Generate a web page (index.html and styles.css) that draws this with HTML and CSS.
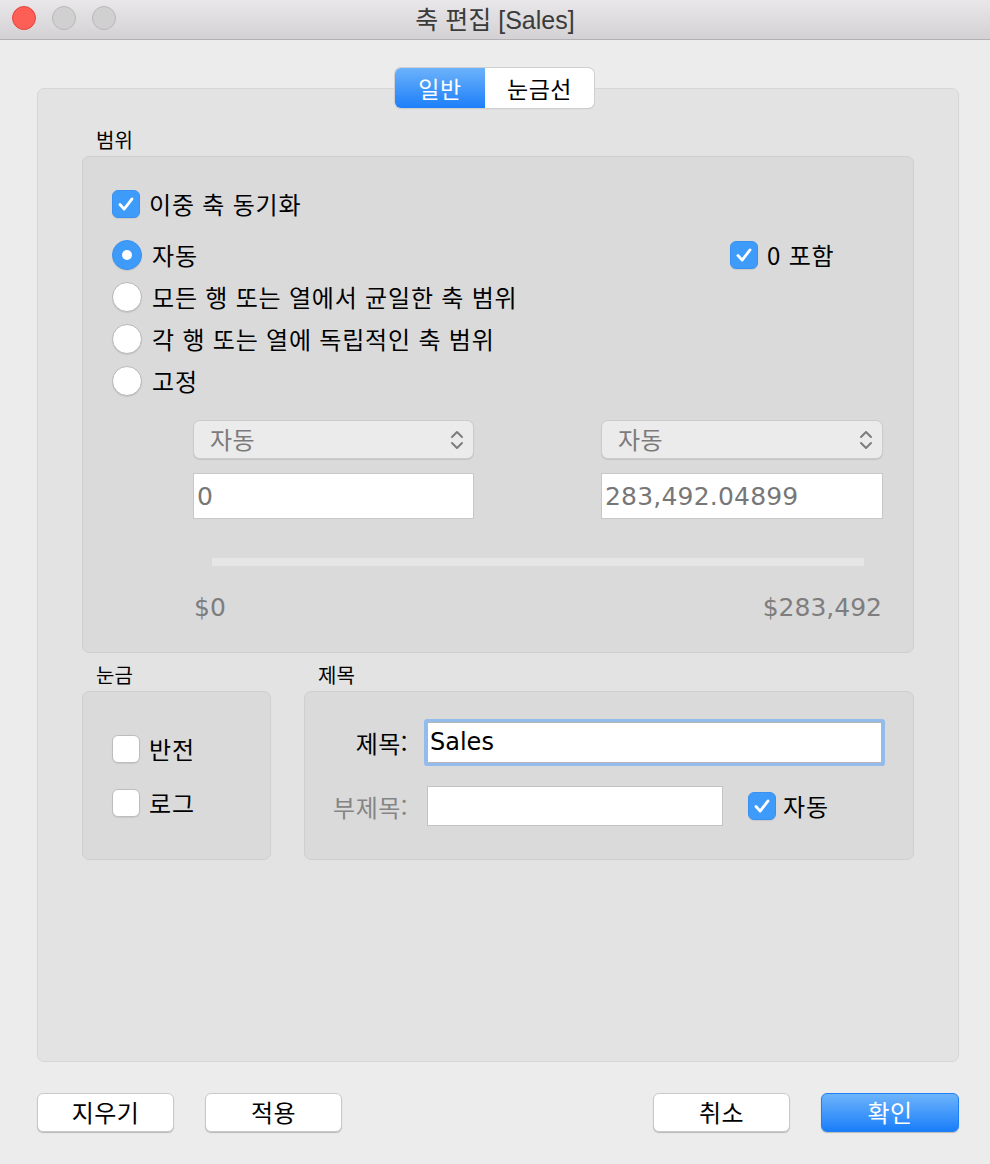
FILE: index.html
```html
<!DOCTYPE html>
<html lang="ko">
<head>
<meta charset="utf-8">
<title>축 편집 [Sales]</title>
<link rel="stylesheet" href="styles.css">
</head>
<body>
<div class="window">
  <header class="titlebar">
    <div class="lights">
      <span class="light red"></span>
      <span class="light"></span>
      <span class="light"></span>
    </div>
    <div class="title">축 편집 [Sales]</div>
    <div></div>
  </header>

  <main class="main">
    <div class="seg-wrap">
      <div class="seg">
        <span class="seg-item active">일반</span>
        <span class="seg-item">눈금선</span>
      </div>
    </div>

    <section class="panel">
      <div class="sec-label">범위</div>
      <div class="group range">
        <label class="chk-row">
          <span class="chk on"><svg viewBox="0 0 28 28"><path d="M7.5 14.5 L12 19.5 L20.5 8.5" /></svg></span>
          <span class="txt">이중 축 동기화</span>
        </label>

        <div class="radios">
          <div class="rrow">
            <label class="radio-item first">
              <span class="radio on"></span><span class="txt">자동</span>
            </label>
            <label class="chk-inline">
              <span class="chk on"><svg viewBox="0 0 28 28"><path d="M7.5 14.5 L12 19.5 L20.5 8.5" /></svg></span>
              <span class="txt">0 포함</span>
            </label>
          </div>
          <div class="rrow">
            <label class="radio-item"><span class="radio"></span><span class="txt">모든 행 또는 열에서 균일한 축 범위</span></label>
          </div>
          <div class="rrow">
            <label class="radio-item"><span class="radio"></span><span class="txt">각 행 또는 열에 독립적인 축 범위</span></label>
          </div>
          <div class="rrow">
            <label class="radio-item"><span class="radio"></span><span class="txt">고정</span></label>
          </div>
        </div>

        <div class="pair selects">
          <div class="select"><span>자동</span>
            <svg class="chev" viewBox="0 0 14 26"><path d="M2 10 L7 5 L12 10 M2 16 L7 21 L12 16"/></svg>
          </div>
          <div class="select"><span>자동</span>
            <svg class="chev" viewBox="0 0 14 26"><path d="M2 10 L7 5 L12 10 M2 16 L7 21 L12 16"/></svg>
          </div>
        </div>
        <div class="pair fields">
          <div class="field">0</div>
          <div class="field">283,492.04899</div>
        </div>

        <div class="slider"></div>
        <div class="range-vals">
          <span>$0</span>
          <span>$283,492</span>
        </div>
      </div>

      <div class="bottom">
        <div class="col">
          <div class="sec-label">눈금</div>
          <div class="group scale">
            <label class="chk-row"><span class="chk"></span><span class="txt">반전</span></label>
            <label class="chk-row second"><span class="chk"></span><span class="txt">로그</span></label>
          </div>
        </div>
        <div class="col">
          <div class="sec-label">제목</div>
          <div class="group titles">
            <div class="trow">
              <span class="tlabel">제목:</span>
              <div class="tinput focus">Sales</div>
            </div>
            <div class="trow second">
              <span class="tlabel muted">부제목:</span>
              <div class="tinput sub"></div>
              <label class="chk-inline auto">
                <span class="chk on"><svg viewBox="0 0 28 28"><path d="M7.5 14.5 L12 19.5 L20.5 8.5" /></svg></span>
                <span class="txt">자동</span>
              </label>
            </div>
          </div>
        </div>
      </div>
    </section>

    <footer class="buttons">
      <button class="btn">지우기</button>
      <button class="btn">적용</button>
      <span class="spacer"></span>
      <button class="btn">취소</button>
      <button class="btn primary">확인</button>
    </footer>
  </main>
</div>
</body>
</html>
```

FILE: styles.css
```css
* { box-sizing: border-box; }

html, body {
  margin: 0;
  padding: 0;
}

body {
  width: 990px;
  height: 1164px;
  background: #ececec;
  font-family: "Noto Sans CJK KR", "Liberation Sans", sans-serif;
  color: #111;
  overflow: hidden;
}

.window {
  width: 990px;
  height: 1164px;
}

/* Title bar */
.titlebar {
  height: 40px;
  display: grid;
  grid-template-columns: 1fr auto 1fr;
  align-items: center;
  background: linear-gradient(#e9e7e9, #d3d1d3);
  border-bottom: 1px solid #b3b1b3;
}

.lights {
  display: flex;
  gap: 16px;
  padding-left: 12px;
  padding-bottom: 3px;
}

.light {
  width: 24px;
  height: 24px;
  border-radius: 50%;
  background: #d1d0d1;
  border: 1px solid #b9b8b9;
}

.light.red {
  background: #fd5f57;
  border-color: #e2463f;
}

.title {
  font-family: "Liberation Sans", "Noto Sans CJK KR", sans-serif;
  font-size: 25px;
  color: #3b3b3b;
  padding-bottom: 3px;
}

/* Main */
.main {
  padding: 28px 31px 0 37px;
}

.seg-wrap {
  display: flex;
  justify-content: center;
  padding-right: 7px;
  position: relative;
  z-index: 2;
}

.seg {
  display: flex;
  height: 40px;
  border-radius: 6px;
  background: #fff;
  box-shadow: 0 0 0 1px #cfcfcf, 0 1px 1px rgba(0,0,0,0.2);
  overflow: hidden;
}

.seg-item {
  display: flex;
  align-items: center;
  justify-content: center;
  font-size: 23px;
  letter-spacing: 0.5px;
  color: #000;
}

.seg-item:first-child { width: 90px; }
.seg-item:last-child { width: 109px; }

.seg-item.active {
  color: #fff;
  background: linear-gradient(#6cb2fb, #1c7ff9);
}

.panel {
  margin-top: -20px;
  height: 974px;
  background: #e3e3e3;
  border: 1px solid #d6d6d6;
  border-radius: 7px;
  padding: 39px 44px 0 44px;
}

.sec-label {
  font-size: 20px;
  line-height: 24px;
  height: 24px;
  padding-left: 14px;
  margin-bottom: 4px;
  color: #000;
}

.group {
  background: #dadada;
  border: 1px solid #cfcfcf;
  border-radius: 7px;
}

.range {
  height: 497px;
  padding: 33px 0 0 29px;
}

.txt {
  font-size: 24px;
  letter-spacing: 0.8px;
  line-height: 28px;
  color: #000;
}

.chk-row, .chk-inline {
  display: flex;
  align-items: center;
  height: 28px;
  gap: 9px;
}

.chk {
  width: 28px;
  height: 28px;
  border-radius: 6px;
  background: #fff;
  border: 1px solid #bdbdbd;
  box-shadow: 0 1px 1px rgba(0,0,0,0.08);
  flex: none;
  display: flex;
}

.chk.on {
  background: #3f9bfa;
  border-color: #3a92f0;
}

.chk svg {
  width: 100%;
  height: 100%;
}

.chk svg path {
  fill: none;
  stroke: #fff;
  stroke-width: 3;
  stroke-linecap: round;
  stroke-linejoin: round;
}

.radios {
  margin-top: 16px;
}

.rrow {
  height: 42px;
  display: flex;
  align-items: center;
}

.radio-item {
  display: flex;
  align-items: center;
  gap: 10px;
}

.radio-item.first {
  width: 618px;
}

.radio {
  width: 30px;
  height: 30px;
  border-radius: 50%;
  background: #fff;
  border: 1px solid #b8b8b8;
  box-shadow: 0 1px 1px rgba(0,0,0,0.1);
  flex: none;
  display: flex;
  align-items: center;
  justify-content: center;
}

.radio.on {
  background: #3f9bfa;
  border-color: #3a92f0;
}

.radio.on::after {
  content: "";
  width: 10px;
  height: 10px;
  border-radius: 50%;
  background: #fff;
}

.pair {
  display: grid;
  grid-template-columns: 281px 282px;
  column-gap: 127px;
  padding-left: 81px;
}

.selects {
  margin-top: 18px;
}

.select {
  height: 39px;
  background: #ebebeb;
  border: 1px solid #cbcbcb;
  border-radius: 7px;
  box-shadow: 0 1px 1px rgba(0,0,0,0.1);
  display: flex;
  align-items: center;
  justify-content: space-between;
  padding: 0 9px 2px 16px;
  font-size: 24px;
  letter-spacing: 0.5px;
  color: #7b7b7b;
}

.chev {
  width: 14px;
  height: 26px;
  margin-top: 2px;
}

.chev path {
  fill: none;
  stroke: #7d7d7d;
  stroke-width: 2;
  stroke-linecap: round;
  stroke-linejoin: round;
}

.fields {
  margin-top: 14px;
}

.field {
  height: 46px;
  background: #fff;
  border: 1px solid #c7c7c7;
  font-family: "DejaVu Sans", sans-serif;
  font-size: 25px;
  color: #777;
  display: flex;
  align-items: center;
  padding-left: 3px;
  letter-spacing: 0.2px;
}

.slider {
  margin: 39px 0 0 100px;
  width: 652px;
  height: 8px;
  background: #e6e6e6;
}

.range-vals {
  margin: 30px 0 0 82px;
  width: 688px;
  display: flex;
  justify-content: space-between;
  font-family: "DejaVu Sans", sans-serif;
  font-size: 25px;
  line-height: 24px;
  color: #7e7e7e;
}

/* Bottom groups */
.bottom {
  margin-top: 10px;
  display: grid;
  grid-template-columns: 189px 610px;
  column-gap: 33px;
}

.bottom .group {
  height: 169px;
}

.scale {
  padding: 43px 0 0 29px;
}

.chk-row.second {
  margin-top: 26px;
}

.titles {
  padding-top: 28px;
}

.trow {
  display: flex;
  align-items: center;
  height: 44px;
}

.trow.second {
  margin-top: 20px;
}

.tlabel {
  width: 103px;
  text-align: right;
  margin-right: 19px;
  font-size: 24px;
  letter-spacing: 0.5px;
  color: #000;
}

.tlabel.muted {
  color: #858585;
}

.tinput {
  height: 41px;
  width: 455px;
  background: #fff;
  border: 1px solid #b5b5b5;
  display: flex;
  align-items: center;
  padding-left: 2px;
  font-family: "DejaVu Sans", sans-serif;
  font-size: 24px;
  color: #000;
}

.tinput.focus {
  box-shadow: 0 0 0 3px #93bcec;
  border-radius: 1px;
}

.tinput.sub {
  width: 296px;
  height: 40px;
  border-color: #c3c3c3;
}

.chk-inline.auto {
  margin-left: 25px;
  gap: 7px;
}

/* Buttons */
.buttons {
  margin-top: 31px;
  display: flex;
  gap: 31px;
}

.spacer {
  flex: 1;
}

.btn {
  width: 137px;
  height: 39px;
  border-radius: 6px;
  background: #fff;
  border: 1px solid #c9c9c9;
  box-shadow: 0 1px 1px rgba(0,0,0,0.22);
  font-family: "Noto Sans CJK KR", sans-serif;
  font-size: 24px;
  letter-spacing: 0.5px;
  color: #000;
  padding: 0 0 3px 0;
}

.btn.primary {
  width: 138px;
  color: #fff;
  border-color: #1f80f5;
  background: linear-gradient(#6db4fb, #1a7ef9);
}
```
